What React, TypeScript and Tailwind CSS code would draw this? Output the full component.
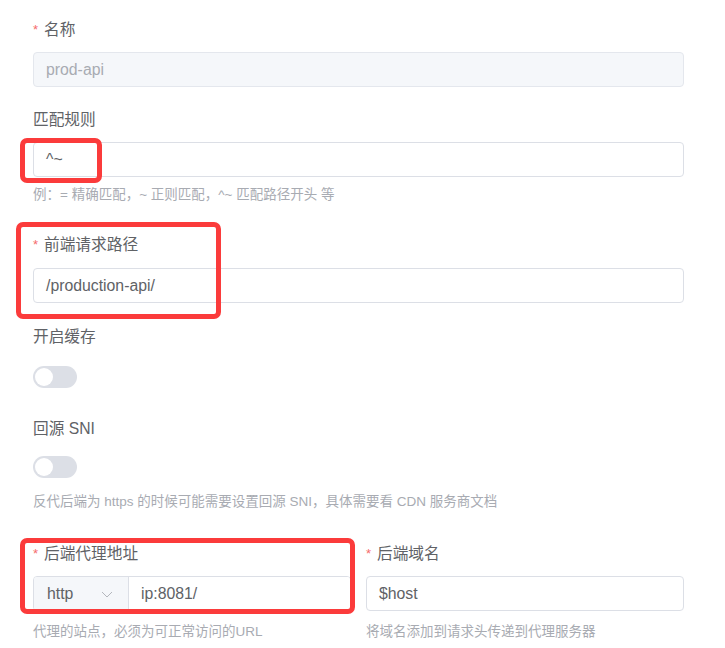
import React from 'react';

const font = { fontFamily: '"Liberation Sans", "Noto Sans CJK SC", sans-serif' };

const Label: React.FC<{ text: string; required?: boolean }> = ({ text, required }) => (
  <div className="h-[22px] leading-[22px] text-[15.7px] text-[#606266] flex items-center">
    {required && <span className="text-[#f56c6c] text-[13px] mr-[5px] w-[6px]">*</span>}
    <span>{text}</span>
  </div>
);

const Help: React.FC<{ text: string; className?: string }> = ({ text, className = 'mt-[9px]' }) => (
  <div className={`h-[18px] leading-[18px] text-[13.5px] text-[#a8abb2] ${className}`}>{text}</div>
);

const Input: React.FC<{ value: string; disabled?: boolean }> = ({ value, disabled }) => (
  <div
    className={`h-[35px] rounded-[4px] border px-[12px] flex items-center text-[15.8px] ${
      disabled ? 'bg-[#f5f7fa] border-[#e4e7ed] text-[#a8abb2]' : 'bg-white border-[#dcdfe6] text-[#606266]'
    }`}
  >
    {value}
  </div>
);

const Switch: React.FC = () => (
  <div className="w-[44px] h-[22px] rounded-full bg-[#dcdfe6] relative">
    <div className="absolute left-[2px] top-[2px] w-[18px] h-[18px] rounded-full bg-white" />
  </div>
);

const Highlight: React.FC<{ className: string }> = ({ className }) => (
  <div className={`absolute border-[5px] border-[#fb3b3b] rounded-[7px] pointer-events-none ${className}`} />
);

export default function App() {
  return (
    <div className="min-h-screen w-full bg-white" style={font}>
      <div className="pl-[33px] pr-[41px] pt-[19px] flex flex-col">
        {/* 名称 */}
        <div className="flex flex-col mb-[22px]">
          <Label text="名称" required />
          <div className="mt-[11px]">
            <Input value="prod-api" disabled />
          </div>
        </div>

        {/* 匹配规则 */}
        <div className="flex flex-col mb-[30px]">
          <Label text="匹配规则" />
          <div className="mt-[11px] relative">
            <Input value="^~" />
            <Highlight className="left-[-13px] top-[-4px] w-[82px] h-[45px]" />
          </div>
          <Help text="例：= 精确匹配，~ 正则匹配，^~ 匹配路径开头 等" />
        </div>

        {/* 前端请求路径 */}
        <div className="flex flex-col mb-[23px] relative">
          <Label text="前端请求路径" required />
          <div className="mt-[12px]">
            <Input value="/production-api/" />
          </div>
          <Highlight className="left-[-17px] top-[-12px] w-[205px] h-[97px]" />
        </div>

        {/* 开启缓存 */}
        <div className="flex flex-col mb-[30px]">
          <Label text="开启缓存" />
          <div className="mt-[18px]">
            <Switch />
          </div>
        </div>

        {/* 回源 SNI */}
        <div className="flex flex-col mb-[32px]">
          <Label text="回源 SNI" />
          <div className="mt-[16px]">
            <Switch />
          </div>
          <Help text="反代后端为 https 的时候可能需要设置回源 SNI，具体需要看 CDN 服务商文档" className="mt-[15px]" />
        </div>

        {/* 后端代理地址 / 后端域名 */}
        <div className="grid grid-cols-2 gap-[15px]">
          <div className="flex flex-col relative">
            <Label text="后端代理地址" required />
            <div className="mt-[11px] h-[35px] flex rounded-[4px] border border-[#dcdfe6] overflow-hidden text-[15.8px] text-[#606266]">
              <div className="w-[95px] bg-[#f5f7fa] border-r border-[#dcdfe6] flex items-center justify-between pl-[13px] pr-[14px]">
                <span>http</span>
                <svg width="14" height="14" viewBox="0 0 14 14" fill="none">
                  <polyline points="2,5 7,10 12,5" stroke="#b4b7bd" strokeWidth="1" />
                </svg>
              </div>
              <div className="flex-1 bg-white flex items-center px-[12px]">ip:8081/</div>
            </div>
            <Help text="代理的站点，必须为可正常访问的URL" className="mt-[12px]" />
            <Highlight className="left-[-13px] top-[-5px] w-[335px] h-[76px]" />
          </div>
          <div className="flex flex-col">
            <Label text="后端域名" required />
            <div className="mt-[11px]">
              <Input value="$host" />
            </div>
            <Help text="将域名添加到请求头传递到代理服务器" className="mt-[12px]" />
          </div>
        </div>
      </div>
    </div>
  );
}
